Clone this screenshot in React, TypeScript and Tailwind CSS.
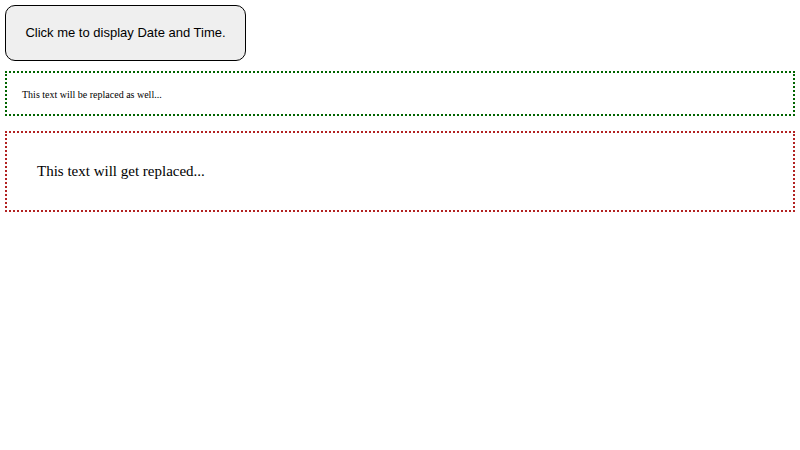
export default function App() {
  return (
    <div className="p-[5px] bg-white min-h-[450px]">
      <button className="w-[241px] h-[56px] rounded-[10px] border border-black bg-[#efefef] text-[13px] text-black font-['Liberation_Sans',Arial,sans-serif]">
        Click me to display Date and Time.
      </button>
      <div className="mt-[10px] border-2 border-dotted border-[#006400] px-[15px] h-[45px] flex items-center pt-px text-[10px] text-black font-['Liberation_Serif','Times_New_Roman',serif]">
        This text will be replaced as well...
      </div>
      <div className="mt-[15px] border-2 border-dotted border-[#b22222] px-[30px] h-[81px] flex items-center text-[15px] text-black font-['Liberation_Serif','Times_New_Roman',serif]">
        This text will get replaced...
      </div>
    </div>
  );
}
